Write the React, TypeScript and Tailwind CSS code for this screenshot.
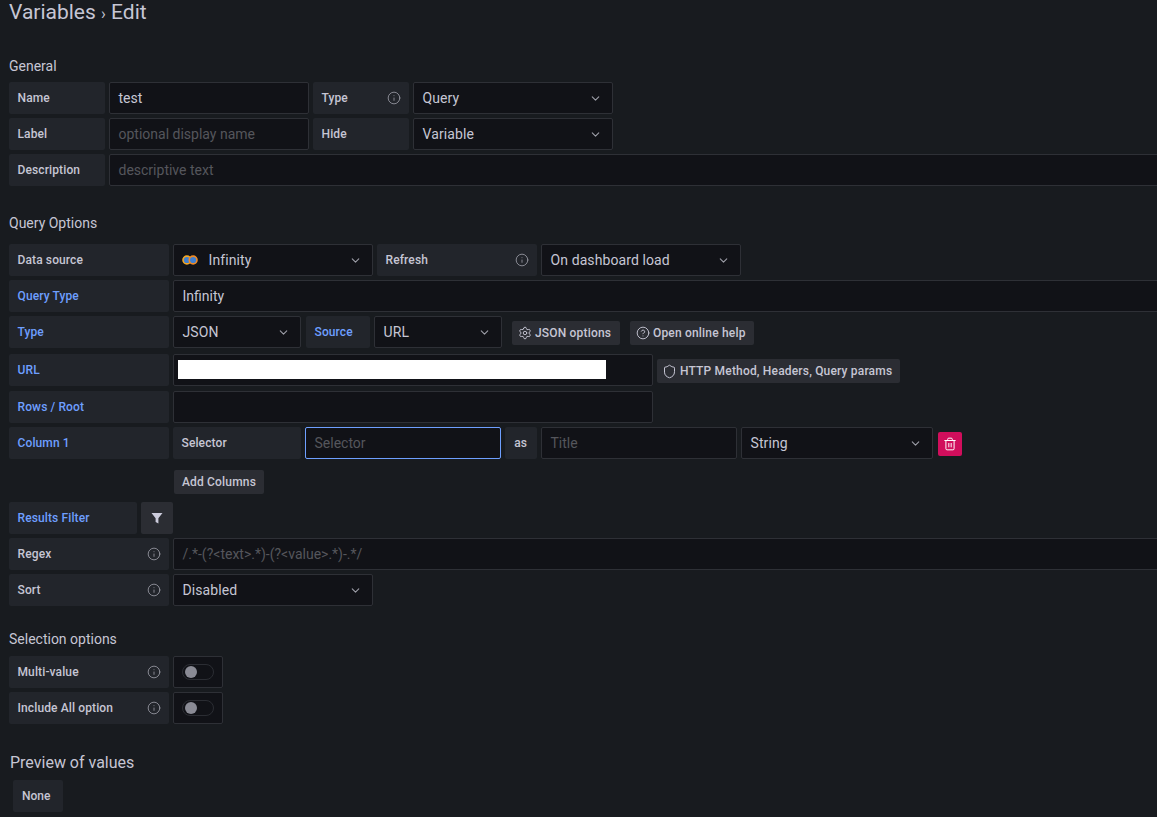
import React from "react";
import { ChevronDown, Info, Settings, CircleHelp, Shield, Trash2 } from "lucide-react";

function Label({ children, w, blue, info }: { children: React.ReactNode; w: string; blue?: boolean; info?: boolean }) {
  return (
    <div className={`${w} h-8 shrink-0 rounded-[2px] bg-[#22252b] pl-[8.5px] pr-2 flex items-center justify-between text-xs font-medium tracking-[0.01em] ${blue ? "text-[#6e9fff]" : "text-[#c6c6d4]"}`}>
      <span className="mt-[-1px]">{children}</span>
      {info && <Info size={14} strokeWidth={1.4} className="text-[#9d9ea8]" />}
    </div>
  );
}

function Field({ w, value, placeholder, focus }: { w: string; value?: string; placeholder?: string; focus?: boolean }) {
  return (
    <div className={`${w} h-8 shrink-0 rounded-[2px] border ${focus ? "border-[#6e9fff]" : "border-[#2e3036]"} bg-[#111217] px-[8.5px] flex items-center text-sm ${value ? "text-[#c6c6d4]" : "text-[#55565c]"}`}>
      {value || placeholder}
    </div>
  );
}

function Select({ w, value, icon }: { w: string; value: string; icon?: boolean }) {
  return (
    <div className={`${w} h-8 shrink-0 rounded-[2px] border border-[#2e3036] bg-[#111217] pl-[8.5px] pr-[10px] flex items-center justify-between text-sm tracking-[0.1px] text-[#c6c6d4]`}>
      <span className="flex items-center gap-[11px]">
        {icon && (
          <svg width="16" height="10" viewBox="0 0 16 10" className="ml-[-1px]">
            <circle cx="4.9" cy="5" r="3.9" fill="#3f7fd0" stroke="#f5a623" strokeWidth="1.6" />
            <circle cx="11.1" cy="5" r="3.9" fill="#3f7fd0" stroke="#f08a24" strokeWidth="1.6" />
          </svg>
        )}
        {value}
      </span>
      <ChevronDown size={13} strokeWidth={2} className="text-[#9d9ea8] mt-[1px]" />
    </div>
  );
}

function Btn({ children, w, tight }: { children: React.ReactNode; w: string; tight?: boolean }) {
  return (
    <div className={`${w} h-6 mt-[2px] rounded-[2px] bg-[#2b2d33] flex items-center ${tight ? "pl-[5px]" : "pl-[6px]"} gap-[3px] text-xs font-medium tracking-[0.015em] text-[#c6c6d4]`}>
      {children}
    </div>
  );
}

function Toggle() {
  return (
    <div className="w-[50px] h-8 rounded-[2px] border border-[#2e3036] bg-[#111217] flex items-center pl-[8px]">
      <div className="w-8 h-4 rounded-full border border-[#2b2d33] relative">
        <div className="absolute left-0 top-[1px] w-3 h-3 ml-[2px] rounded-full bg-[#8a8b95]" />
      </div>
    </div>
  );
}

export default function App() {
  return (
    <div className="h-[817px] w-full overflow-hidden bg-[#181b1f] pl-[9px] text-[#c6c6d4] font-['Roboto',sans-serif]">
      <h2 className="h-6 text-[21px] leading-6 whitespace-nowrap">
        Variables <span className="text-[16px]">›</span> Edit
      </h2>

      <h3 className="mt-[33px] h-[18px] text-sm leading-[18px]">General</h3>
      <div className="mt-[7px] flex flex-col gap-1">
        <div className="flex gap-1">
          <Label w="w-24">Name</Label>
          <Field w="w-[200px]" value="test" />
          <Label w="w-24" info>Type</Label>
          <Select w="w-[200px]" value="Query" />
        </div>
        <div className="flex gap-1">
          <Label w="w-24">Label</Label>
          <Field w="w-[200px]" placeholder="optional display name" />
          <Label w="w-24">Hide</Label>
          <Select w="w-[200px]" value="Variable" />
        </div>
        <div className="flex gap-1">
          <Label w="w-24">Description</Label>
          <Field w="w-[1100px]" placeholder="descriptive text" />
        </div>
      </div>

      <h3 className="mt-[28px] h-[18px] text-sm leading-[18px]">Query Options</h3>
      <div className="mt-[12px] flex flex-col">
        <div className="flex gap-1">
          <Label w="w-40">Data source</Label>
          <Select w="w-[200px]" value="Infinity" icon />
          <Label w="w-40" info>Refresh</Label>
          <Select w="w-[200px]" value="On dashboard load" />
        </div>
        <div className="mt-1 flex gap-1">
          <Label w="w-40" blue>Query Type</Label>
          <Field w="w-[1100px]" value="Infinity" />
        </div>
        <div className="mt-1 flex items-center gap-1">
          <Label w="w-40" blue>Type</Label>
          <Select w="w-32" value="JSON" />
          <div className="ml-[1px]"><Label w="w-16" blue>Source</Label></div>
          <Select w="w-32" value="URL" />
          <div className="ml-[6px]">
            <Btn w="w-[108px]"><Settings size={14} strokeWidth={1.6} />JSON options</Btn>
          </div>
          <div className="ml-[6px]">
            <Btn w="w-[124px]"><CircleHelp size={14} strokeWidth={1.6} />Open online help</Btn>
          </div>
        </div>
        <div className="mt-[6px] flex items-center gap-1">
          <Label w="w-40" blue>URL</Label>
          <div className="w-[480px] h-8 rounded-[2px] border border-[#2e3036] bg-[#111217] pl-1 pb-[1px] flex items-center">
            <div className="w-[428px] h-[19px] bg-white" />
          </div>
          <Btn w="w-[243px]" tight><Shield size={15} strokeWidth={1.6} />HTTP Method, Headers, Query params</Btn>
        </div>
        <div className="mt-[5px] flex gap-1">
          <Label w="w-40" blue>Rows / Root</Label>
          <Field w="w-[480px]" />
        </div>
        <div className="mt-1 flex items-center gap-1">
          <Label w="w-40" blue>Column 1</Label>
          <Label w="w-32">Selector</Label>
          <Field w="w-[196px]" placeholder="Selector" focus />
          <div className="w-8 h-8 rounded-[2px] bg-[#22252b] flex items-center justify-center pr-[1px] text-xs font-medium">as</div>
          <Field w="w-[196px]" placeholder="Title" />
          <Select w="w-[192px]" value="String" />
          <div className="ml-[1px] mt-[2px] w-6 h-6 rounded-[2px] bg-[#d10e5c] flex items-center justify-center text-white">
            <Trash2 size={14} strokeWidth={1.7} />
          </div>
        </div>
        <div className="mt-[11px] ml-[165px]">
          <div className="w-[90px] h-6 rounded-[2px] bg-[#2b2d33] flex items-center justify-center text-xs font-medium tracking-[0.015em]">Add Columns</div>
        </div>
        <div className="mt-2 flex gap-1">
          <Label w="w-32" blue>Results Filter</Label>
          <div className="w-8 h-8 rounded-[2px] bg-[#2b2d33] flex items-center justify-center">
            <svg width="12" height="12" viewBox="0 0 12 12" fill="#ccccdc"><path d="M0.5 1h11L7.4 6.2V11.5L4.6 10V6.2z" /></svg>
          </div>
        </div>
        <div className="mt-1 flex gap-1">
          <Label w="w-40" info>Regex</Label>
          <Field w="w-[1100px]" placeholder="/.*-(?<text>.*)-(?<value>.*)-.*/" />
        </div>
        <div className="mt-1 flex gap-1">
          <Label w="w-40" info>Sort</Label>
          <Select w="w-[200px]" value="Disabled" />
        </div>
      </div>

      <h3 className="mt-6 h-[18px] text-sm leading-[18px]">Selection options</h3>
      <div className="mt-2 flex flex-col gap-1">
        <div className="flex gap-1">
          <Label w="w-40" info>Multi-value</Label>
          <Toggle />
        </div>
        <div className="flex gap-1">
          <Label w="w-40" info>Include All option</Label>
          <Toggle />
        </div>
      </div>

      <h3 className="mt-[28px] ml-[1px] h-[22px] text-base leading-[22px]">Preview of values</h3>
      <div className="mt-[6px] ml-1 w-[50px] h-8 rounded-[2px] bg-[#22252b] flex items-center pl-[9px] text-xs font-medium">None</div>
    </div>
  );
}
